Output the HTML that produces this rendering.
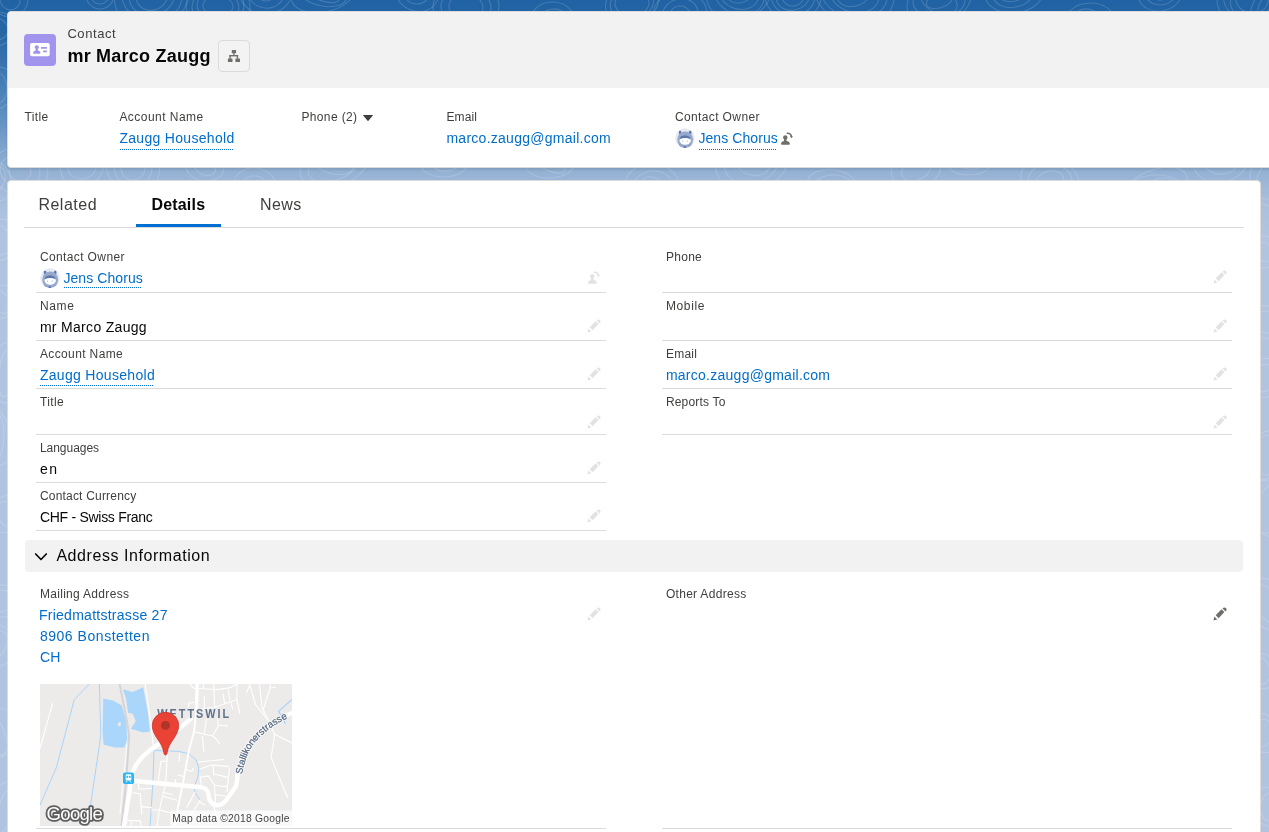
<!DOCTYPE html>
<html><head><meta charset="utf-8">
<style>
*{box-sizing:border-box;margin:0;padding:0}
html,body{width:1269px;height:832px;overflow:hidden}
body{font-family:"Liberation Sans",sans-serif;background:#b0c4df;position:relative;color:#080707}
.bg{position:absolute;left:0;top:0;width:1269px;height:832px;background:linear-gradient(to bottom,#2062a3 0px,#2666a6 30px,#3772af 60px,#5086bb 100px,#6c98c6 130px,#8aabd0 160px,#9fb8d8 185px,#acc1dd 210px,#b0c4df 235px,#b0c4df 832px);clip-path:circle(9999px)}
.t{position:absolute;white-space:nowrap;line-height:1}
.hdr{position:absolute;left:7px;top:11px;width:1280px;height:157px;background:#fff;border:1px solid #dddbda;border-radius:4px;box-shadow:0 2px 2px rgba(0,0,0,.1);overflow:hidden}
.hdr .top{position:absolute;left:0;top:0;width:100%;height:76px;background:#f3f2f2}
.card{position:absolute;left:7px;top:180px;width:1254px;height:700px;background:#fff;border:1px solid #dddbda;border-radius:4px 4px 0 0}
.hl{position:absolute;height:1px;background:#dddbda}
.dot{position:absolute;height:1px;background-image:linear-gradient(to right,#006dcc 50%,rgba(0,109,204,0) 50%);background-size:2px 1px}
.abs{position:absolute}
</style></head><body>
<div class="bg"></div>
<svg class="abs" style="left:0;top:0" width="1269" height="832" viewBox="0 0 1269 832" fill="none" stroke="#fff" stroke-opacity=".16" stroke-width="1.100"><ellipse cx="10" cy="-1" rx="10" ry="11" transform="rotate(-20 10 -1)"/><ellipse cx="10" cy="-1" rx="18" ry="18" transform="rotate(4 10 -1)"/><ellipse cx="100" cy="-5" rx="9" ry="9" transform="rotate(-4 100 -5)"/><ellipse cx="100" cy="-5" rx="14" ry="14" transform="rotate(16 100 -5)"/><ellipse cx="152" cy="-4" rx="16" ry="14" transform="rotate(-23 152 -4)"/><ellipse cx="152" cy="-4" rx="23" ry="19" transform="rotate(-14 152 -4)"/><ellipse cx="152" cy="-4" rx="30" ry="25" transform="rotate(3 152 -4)"/><ellipse cx="152" cy="-4" rx="38" ry="31" transform="rotate(-18 152 -4)"/><ellipse cx="218" cy="6" rx="15" ry="10" transform="rotate(4 218 6)"/><ellipse cx="218" cy="6" rx="21" ry="15" transform="rotate(7 218 6)"/><ellipse cx="218" cy="6" rx="26" ry="20" transform="rotate(-6 218 6)"/><ellipse cx="218" cy="6" rx="32" ry="24" transform="rotate(2 218 6)"/><ellipse cx="266" cy="-10" rx="10" ry="11" transform="rotate(-2 266 -10)"/><ellipse cx="266" cy="-10" rx="19" ry="18" transform="rotate(21 266 -10)"/><ellipse cx="266" cy="-10" rx="27" ry="24" transform="rotate(-7 266 -10)"/><ellipse cx="323" cy="-6" rx="17" ry="7" transform="rotate(19 323 -6)"/><ellipse cx="323" cy="-6" rx="24" ry="12" transform="rotate(11 323 -6)"/><ellipse cx="323" cy="-6" rx="32" ry="18" transform="rotate(-11 323 -6)"/><ellipse cx="417" cy="-8" rx="13" ry="12" transform="rotate(-4 417 -8)"/><ellipse cx="417" cy="-8" rx="22" ry="19" transform="rotate(23 417 -8)"/><ellipse cx="466" cy="7" rx="17" ry="13" transform="rotate(5 466 7)"/><ellipse cx="466" cy="7" rx="25" ry="19" transform="rotate(4 466 7)"/><ellipse cx="466" cy="7" rx="33" ry="25" transform="rotate(-2 466 7)"/><ellipse cx="553" cy="20" rx="14" ry="11" transform="rotate(-10 553 20)"/><ellipse cx="553" cy="20" rx="22" ry="18" transform="rotate(4 553 20)"/><ellipse cx="632" cy="3" rx="17" ry="13" transform="rotate(-2 632 3)"/><ellipse cx="632" cy="3" rx="22" ry="17" transform="rotate(-17 632 3)"/><ellipse cx="632" cy="3" rx="27" ry="21" transform="rotate(-19 632 3)"/><ellipse cx="680" cy="14" rx="10" ry="8" transform="rotate(-0 680 14)"/><ellipse cx="680" cy="14" rx="18" ry="15" transform="rotate(-17 680 14)"/><ellipse cx="680" cy="14" rx="27" ry="22" transform="rotate(-5 680 14)"/><ellipse cx="739" cy="-7" rx="13" ry="10" transform="rotate(-7 739 -7)"/><ellipse cx="739" cy="-7" rx="20" ry="16" transform="rotate(19 739 -7)"/><ellipse cx="739" cy="-7" rx="26" ry="21" transform="rotate(23 739 -7)"/><ellipse cx="739" cy="-7" rx="33" ry="26" transform="rotate(-17 739 -7)"/><ellipse cx="793" cy="-4" rx="11" ry="10" transform="rotate(-11 793 -4)"/><ellipse cx="793" cy="-4" rx="17" ry="14" transform="rotate(-18 793 -4)"/><ellipse cx="793" cy="-4" rx="22" ry="19" transform="rotate(2 793 -4)"/><ellipse cx="793" cy="-4" rx="28" ry="24" transform="rotate(5 793 -4)"/><ellipse cx="854" cy="-8" rx="18" ry="14" transform="rotate(-22 854 -8)"/><ellipse cx="854" cy="-8" rx="26" ry="20" transform="rotate(20 854 -8)"/><ellipse cx="854" cy="-8" rx="34" ry="26" transform="rotate(14 854 -8)"/><ellipse cx="854" cy="-8" rx="41" ry="32" transform="rotate(19 854 -8)"/><ellipse cx="939" cy="1" rx="13" ry="7" transform="rotate(-15 939 1)"/><ellipse cx="939" cy="1" rx="19" ry="12" transform="rotate(24 939 1)"/><ellipse cx="939" cy="1" rx="26" ry="17" transform="rotate(-3 939 1)"/><ellipse cx="939" cy="1" rx="33" ry="23" transform="rotate(-20 939 1)"/><ellipse cx="1014" cy="-9" rx="15" ry="10" transform="rotate(-21 1014 -9)"/><ellipse cx="1014" cy="-9" rx="22" ry="16" transform="rotate(-15 1014 -9)"/><ellipse cx="1014" cy="-9" rx="30" ry="22" transform="rotate(-6 1014 -9)"/><ellipse cx="1090" cy="20" rx="15" ry="10" transform="rotate(25 1090 20)"/><ellipse cx="1090" cy="20" rx="24" ry="17" transform="rotate(-2 1090 20)"/><ellipse cx="1160" cy="-9" rx="9" ry="9" transform="rotate(10 1160 -9)"/><ellipse cx="1160" cy="-9" rx="16" ry="14" transform="rotate(1 1160 -9)"/><ellipse cx="1160" cy="-9" rx="23" ry="20" transform="rotate(-15 1160 -9)"/><ellipse cx="1252" cy="0" rx="16" ry="13" transform="rotate(7 1252 0)"/><ellipse cx="1252" cy="0" rx="22" ry="18" transform="rotate(-20 1252 0)"/><ellipse cx="1252" cy="0" rx="29" ry="23" transform="rotate(17 1252 0)"/><ellipse cx="1252" cy="0" rx="35" ry="28" transform="rotate(1 1252 0)"/><ellipse cx="20" cy="171" rx="11" ry="10" transform="rotate(6 20 171)"/><ellipse cx="20" cy="171" rx="20" ry="17" transform="rotate(14 20 171)"/><ellipse cx="20" cy="171" rx="28" ry="24" transform="rotate(13 20 171)"/><ellipse cx="82" cy="167" rx="14" ry="12" transform="rotate(-7 82 167)"/><ellipse cx="82" cy="167" rx="22" ry="19" transform="rotate(-24 82 167)"/><ellipse cx="133" cy="168" rx="12" ry="12" transform="rotate(22 133 168)"/><ellipse cx="133" cy="168" rx="19" ry="18" transform="rotate(24 133 168)"/><ellipse cx="133" cy="168" rx="27" ry="24" transform="rotate(23 133 168)"/><ellipse cx="205" cy="167" rx="11" ry="8" transform="rotate(24 205 167)"/><ellipse cx="205" cy="167" rx="19" ry="14" transform="rotate(6 205 167)"/><ellipse cx="255" cy="187" rx="13" ry="11" transform="rotate(14 255 187)"/><ellipse cx="255" cy="187" rx="22" ry="19" transform="rotate(13 255 187)"/><ellipse cx="334" cy="165" rx="19" ry="9" transform="rotate(12 334 165)"/><ellipse cx="334" cy="165" rx="27" ry="15" transform="rotate(-21 334 165)"/><ellipse cx="334" cy="165" rx="35" ry="21" transform="rotate(-17 334 165)"/><ellipse cx="444" cy="161" rx="16" ry="10" transform="rotate(5 444 161)"/><ellipse cx="444" cy="161" rx="25" ry="16" transform="rotate(-1 444 161)"/><ellipse cx="550" cy="165" rx="16" ry="6" transform="rotate(22 550 165)"/><ellipse cx="550" cy="165" rx="24" ry="13" transform="rotate(-3 550 165)"/><ellipse cx="652" cy="185" rx="11" ry="8" transform="rotate(13 652 185)"/><ellipse cx="652" cy="185" rx="19" ry="14" transform="rotate(-9 652 185)"/><ellipse cx="652" cy="185" rx="27" ry="21" transform="rotate(2 652 185)"/><ellipse cx="752" cy="162" rx="18" ry="13" transform="rotate(19 752 162)"/><ellipse cx="752" cy="162" rx="28" ry="21" transform="rotate(-18 752 162)"/><ellipse cx="752" cy="162" rx="37" ry="28" transform="rotate(-17 752 162)"/><ellipse cx="833" cy="186" rx="19" ry="11" transform="rotate(-1 833 186)"/><ellipse cx="833" cy="186" rx="26" ry="16" transform="rotate(11 833 186)"/><ellipse cx="916" cy="170" rx="15" ry="10" transform="rotate(-22 916 170)"/><ellipse cx="916" cy="170" rx="25" ry="18" transform="rotate(-15 916 170)"/><ellipse cx="969" cy="163" rx="14" ry="6" transform="rotate(6 969 163)"/><ellipse cx="969" cy="163" rx="22" ry="12" transform="rotate(0 969 163)"/><ellipse cx="1050" cy="181" rx="14" ry="10" transform="rotate(-13 1050 181)"/><ellipse cx="1050" cy="181" rx="22" ry="17" transform="rotate(1 1050 181)"/><ellipse cx="1050" cy="181" rx="30" ry="23" transform="rotate(19 1050 181)"/><ellipse cx="1155" cy="188" rx="20" ry="8" transform="rotate(-19 1155 188)"/><ellipse cx="1155" cy="188" rx="27" ry="13" transform="rotate(-3 1155 188)"/><ellipse cx="1155" cy="188" rx="34" ry="18" transform="rotate(-21 1155 188)"/><ellipse cx="1220" cy="162" rx="17" ry="12" transform="rotate(7 1220 162)"/><ellipse cx="1220" cy="162" rx="27" ry="20" transform="rotate(-7 1220 162)"/><ellipse cx="-4" cy="29" rx="12" ry="11" transform="rotate(19 -4 29)"/><ellipse cx="-4" cy="29" rx="19" ry="17" transform="rotate(-17 -4 29)"/><ellipse cx="1269" cy="22" rx="12" ry="25" transform="rotate(-5 1269 22)"/><ellipse cx="1269" cy="22" rx="19" ry="31" transform="rotate(-4 1269 22)"/><ellipse cx="-2" cy="88" rx="9" ry="15" transform="rotate(-2 -2 88)"/><ellipse cx="-2" cy="88" rx="16" ry="21" transform="rotate(10 -2 88)"/><ellipse cx="1266" cy="101" rx="8" ry="24" transform="rotate(-19 1266 101)"/><ellipse cx="1266" cy="101" rx="15" ry="30" transform="rotate(21 1266 101)"/><ellipse cx="-3" cy="181" rx="7" ry="14" transform="rotate(20 -3 181)"/><ellipse cx="-3" cy="181" rx="14" ry="20" transform="rotate(-16 -3 181)"/><ellipse cx="1270" cy="180" rx="13" ry="20" transform="rotate(22 1270 180)"/><ellipse cx="1270" cy="180" rx="20" ry="26" transform="rotate(-5 1270 180)"/><ellipse cx="0" cy="240" rx="10" ry="15" transform="rotate(-11 0 240)"/><ellipse cx="0" cy="240" rx="17" ry="21" transform="rotate(15 0 240)"/><ellipse cx="1264" cy="252" rx="8" ry="10" transform="rotate(-21 1264 252)"/><ellipse cx="1264" cy="252" rx="15" ry="16" transform="rotate(-12 1264 252)"/><ellipse cx="1" cy="302" rx="8" ry="12" transform="rotate(-24 1 302)"/><ellipse cx="1" cy="302" rx="15" ry="17" transform="rotate(25 1 302)"/><ellipse cx="1266" cy="322" rx="11" ry="11" transform="rotate(10 1266 322)"/><ellipse cx="1266" cy="322" rx="18" ry="16" transform="rotate(22 1266 322)"/><ellipse cx="6" cy="373" rx="7" ry="24" transform="rotate(6 6 373)"/><ellipse cx="6" cy="373" rx="14" ry="30" transform="rotate(2 6 373)"/><ellipse cx="1264" cy="378" rx="11" ry="14" transform="rotate(15 1264 378)"/><ellipse cx="1264" cy="378" rx="18" ry="20" transform="rotate(25 1264 378)"/><ellipse cx="-6" cy="436" rx="10" ry="25" transform="rotate(1 -6 436)"/><ellipse cx="-6" cy="436" rx="17" ry="30" transform="rotate(-13 -6 436)"/><ellipse cx="1266" cy="455" rx="11" ry="20" transform="rotate(2 1266 455)"/><ellipse cx="1266" cy="455" rx="18" ry="25" transform="rotate(19 1266 455)"/><ellipse cx="6" cy="514" rx="8" ry="13" transform="rotate(-15 6 514)"/><ellipse cx="6" cy="514" rx="15" ry="19" transform="rotate(19 6 514)"/><ellipse cx="1269" cy="509" rx="14" ry="25" transform="rotate(17 1269 509)"/><ellipse cx="1269" cy="509" rx="21" ry="30" transform="rotate(-24 1269 509)"/><ellipse cx="2" cy="601" rx="9" ry="11" transform="rotate(8 2 601)"/><ellipse cx="2" cy="601" rx="16" ry="16" transform="rotate(-6 2 601)"/><ellipse cx="1267" cy="604" rx="11" ry="20" transform="rotate(-23 1267 604)"/><ellipse cx="1267" cy="604" rx="18" ry="26" transform="rotate(-16 1267 604)"/><ellipse cx="-3" cy="645" rx="9" ry="15" transform="rotate(24 -3 645)"/><ellipse cx="-3" cy="645" rx="16" ry="21" transform="rotate(-9 -3 645)"/><ellipse cx="1262" cy="671" rx="8" ry="13" transform="rotate(-8 1262 671)"/><ellipse cx="1262" cy="671" rx="15" ry="18" transform="rotate(-21 1262 671)"/><ellipse cx="-3" cy="735" rx="8" ry="22" transform="rotate(-20 -3 735)"/><ellipse cx="-3" cy="735" rx="15" ry="27" transform="rotate(16 -3 735)"/><ellipse cx="1263" cy="733" rx="9" ry="14" transform="rotate(6 1263 733)"/><ellipse cx="1263" cy="733" rx="16" ry="20" transform="rotate(-21 1263 733)"/><ellipse cx="5" cy="811" rx="7" ry="23" transform="rotate(14 5 811)"/><ellipse cx="5" cy="811" rx="14" ry="29" transform="rotate(5 5 811)"/><ellipse cx="1270" cy="807" rx="10" ry="14" transform="rotate(6 1270 807)"/><ellipse cx="1270" cy="807" rx="17" ry="20" transform="rotate(-18 1270 807)"/></svg>
<div class="hdr"><div class="top"></div></div>
<div class="card"></div>
<!-- tab line -->
<div class="hl" style="left:24px;top:227px;width:1220px"></div>
<div class="abs" style="left:136px;top:224px;width:85px;height:3px;background:#0070d2"></div>
<!-- field lines left -->
<div class="hl" style="left:36px;top:292px;width:570px"></div>
<div class="hl" style="left:36px;top:340px;width:570px"></div>
<div class="hl" style="left:36px;top:388px;width:570px"></div>
<div class="hl" style="left:36px;top:434px;width:570px"></div>
<div class="hl" style="left:36px;top:482px;width:570px"></div>
<div class="hl" style="left:36px;top:530px;width:570px"></div>
<div class="hl" style="left:36px;top:828px;width:570px"></div>
<!-- field lines right -->
<div class="hl" style="left:662px;top:292px;width:570px"></div>
<div class="hl" style="left:662px;top:340px;width:570px"></div>
<div class="hl" style="left:662px;top:388px;width:570px"></div>
<div class="hl" style="left:662px;top:434px;width:570px"></div>
<div class="hl" style="left:662px;top:828px;width:570px"></div>
<!-- section header -->
<div class="abs" style="left:25px;top:540px;width:1218px;height:32px;background:#f3f2f2;border-radius:4px"></div>
<!-- svg defs -->
<svg width="0" height="0" style="position:absolute">
<defs>
<clipPath id="avc"><circle cx="10" cy="10" r="10"/></clipPath>
<g id="pencil"><path d="M0.500,13.400 L1.300,9.600 L4.300,12.600 Z"/><path d="M2.700,8.300 L8.500,2.300 L11.400,5.100 L5.600,11.200 Z"/><path d="M9.500,1.400 Q11.200,-0.200 12.900,1.100 Q14.400,2.700 12.500,4.400 Z"/></g>
<g id="owner"><ellipse cx="4.3" cy="5.6" rx="2.2" ry="2.4"/><path d="M3.2,7 L5.4,7 L5.6,9 Q8.6,9.6 8.8,11.2 L8.8,12.1 Q8.8,12.8 8,12.8 L0.9,12.8 Q0.1,12.8 0.1,12.1 L0.1,11.2 Q0.3,9.6 3,9 Z"/><path d="M6.3,1.2 Q9.6,1 10.5,4.2" fill="none" stroke="currentColor" stroke-width="1.5" stroke-linecap="round"/><path d="M8.9,4.1 L12,4.4 L10.5,6.2 Z"/></g>
<g id="astro" clip-path="url(#avc)"><circle cx="10" cy="10" r="10" fill="#e6eaf2"/><rect x="3.900" y="2.800" width="2.400" height="3.600" rx=".9" fill="#5d77a8"/><rect x="14" y="2.800" width="2.400" height="3.600" rx=".9" fill="#5d77a8"/><circle cx="10.200" cy="11.400" r="7.900" fill="#96a8cc"/><path d="M3.500,15 L4.500,20 L15.900,20 L16.900,15Z" fill="#96a8cc"/><ellipse cx="10.200" cy="12.600" rx="5.700" ry="4.200" fill="#fff"/><path d="M4.800,11.200 Q5.200,7.600 8.600,7.800 Q9,6.900 10.200,7.400 Q11.600,6.700 12.200,7.900 Q15.300,8.300 15.600,11.200 Q10.200,8.600 4.800,11.200Z" fill="#5d77a8"/><circle cx="7.600" cy="13.200" r=".6" fill="#a9b8d6"/><circle cx="12.300" cy="13.200" r=".6" fill="#a9b8d6"/><circle cx="9.800" cy="19.200" r="1.300" fill="#5d77a8"/></g>
</defs></svg>
<!-- contact icon -->
<div class="abs" style="left:24px;top:34px;width:32px;height:32px;background:#a094ed;border-radius:4px"></div>
<svg class="abs" style="left:24px;top:34px" width="32" height="32" viewBox="0 0 32 32"><rect x="6.1" y="9" width="19.6" height="13.3" rx="1.8" fill="#fff"/><circle cx="12.8" cy="13.2" r="2" fill="#a094ed"/><path d="M11.8,14.5h2l.2,2q2.4.4,2.4,2v.6q0,.7-.7.700h-5.800q-.7,0-.7-.7v-.6q0-1.600,2.400-2z" fill="#a094ed"/><rect x="17" y="13" width="5.900" height="1.800" rx=".3" fill="#a094ed"/><rect x="19.100" y="16.400" width="3.800" height="1.900" rx=".3" fill="#a094ed"/></svg>
<!-- hierarchy button -->
<div class="abs" style="left:218px;top:40px;width:32px;height:32px;border:1px solid #dddbda;border-radius:4px;background:#f4f3f3"></div>
<svg class="abs" style="left:226px;top:48px" width="16" height="16" viewBox="0 0 16 16" fill="#706e6b"><rect x="5.800" y="1.900" width="4.300" height="3.300" rx=".4"/><rect x="7.300" y="5" width="1.300" height="2.200"/><rect x="3.400" y="7" width="8.700" height="1.400"/><rect x="3.400" y="7" width="1.400" height="3.700"/><rect x="10.700" y="7" width="1.400" height="3.700"/><rect x="1.900" y="10.600" width="4.600" height="3.400" rx=".4"/><rect x="9.400" y="10.600" width="4.600" height="3.400" rx=".4"/></svg>
<!-- phone triangle -->
<svg class="abs" style="left:362px;top:114px" width="12" height="8" viewBox="0 0 12 8"><path d="M0.800,.9 L11.200,.9 L6,7.200 Z" fill="#3e3e3c"/></svg>
<!-- avatars -->
<svg class="abs" style="left:675px;top:128px" width="20" height="20" viewBox="0 0 20 20"><use href="#astro"/></svg>
<svg class="abs" style="left:40px;top:268px" width="20" height="20" viewBox="0 0 20 20"><use href="#astro"/></svg>
<!-- change owner icons -->
<svg class="abs" style="left:781px;top:131.500px;color:#706e6b" width="14" height="14" viewBox="0 0 14 14" fill="#706e6b"><use href="#owner"/></svg>
<svg class="abs" style="left:587.500px;top:270.700px;color:#e4e2e1" width="14" height="14" viewBox="0 0 14 14" fill="#e4e2e1"><use href="#owner"/></svg>
<!-- dotted underlines -->
<div class="dot" style="left:120px;top:149px;width:114px"></div>
<div class="dot" style="left:699px;top:149px;width:78px"></div>
<div class="dot" style="left:64px;top:287px;width:78px"></div>
<div class="dot" style="left:40px;top:385px;width:114px"></div>
<!-- pencils left -->
<svg class="abs" style="left:587px;top:319.200px" width="14" height="14" fill="#e4e2e1"><use href="#pencil"/></svg>
<svg class="abs" style="left:587px;top:367.200px" width="14" height="14" fill="#e4e2e1"><use href="#pencil"/></svg>
<svg class="abs" style="left:587px;top:415.200px" width="14" height="14" fill="#e4e2e1"><use href="#pencil"/></svg>
<svg class="abs" style="left:587px;top:461.200px" width="14" height="14" fill="#e4e2e1"><use href="#pencil"/></svg>
<svg class="abs" style="left:587px;top:509.200px" width="14" height="14" fill="#e4e2e1"><use href="#pencil"/></svg>
<svg class="abs" style="left:587px;top:607px" width="14" height="14" fill="#e4e2e1"><use href="#pencil"/></svg>
<!-- pencils right -->
<svg class="abs" style="left:1213px;top:270.200px" width="14" height="14" fill="#e4e2e1"><use href="#pencil"/></svg>
<svg class="abs" style="left:1213px;top:319.200px" width="14" height="14" fill="#e4e2e1"><use href="#pencil"/></svg>
<svg class="abs" style="left:1213px;top:367.200px" width="14" height="14" fill="#e4e2e1"><use href="#pencil"/></svg>
<svg class="abs" style="left:1213px;top:415.200px" width="14" height="14" fill="#e4e2e1"><use href="#pencil"/></svg>
<svg class="abs" style="left:1213px;top:607px" width="14" height="14" fill="#706e6b"><use href="#pencil"/></svg>
<!-- chevron -->
<svg class="abs" style="left:33px;top:550px" width="16" height="12" viewBox="0 0 16 12"><path d="M2.700,4 L8,9.500 L13.300,4" fill="none" stroke="#080707" stroke-width="1.700" stroke-linecap="round" stroke-linejoin="round"/></svg>

<div id="txt" style="position:absolute;left:0;top:0;width:1269px;height:832px;will-change:transform">
<div class="t" style="left:67.40px;top:27px;font-size:13px;font-weight:400;color:#3e3e3c;letter-spacing:0.57px">Contact</div>
<div class="t" style="left:67.40px;top:47px;font-size:18px;font-weight:700;color:#080707;letter-spacing:0.23px">mr Marco Zaugg</div>
<div class="t" style="left:24.40px;top:111px;font-size:12px;font-weight:400;color:#3e3e3c;letter-spacing:0.40px">Title</div>
<div class="t" style="left:119.40px;top:111px;font-size:12px;font-weight:400;color:#3e3e3c;letter-spacing:0.47px">Account Name</div>
<div class="t" style="left:119.40px;top:131px;font-size:14px;font-weight:400;color:#006dcc;letter-spacing:0.31px">Zaugg Household</div>
<div class="t" style="left:301.40px;top:111px;font-size:12px;font-weight:400;color:#3e3e3c;letter-spacing:0.37px">Phone (2)</div>
<div class="t" style="left:446.40px;top:111px;font-size:12px;font-weight:400;color:#3e3e3c;letter-spacing:0.15px">Email</div>
<div class="t" style="left:446.40px;top:131px;font-size:14px;font-weight:400;color:#006dcc;letter-spacing:0.27px">marco.zaugg@gmail.com</div>
<div class="t" style="left:674.90px;top:111px;font-size:12px;font-weight:400;color:#3e3e3c;letter-spacing:0.38px">Contact Owner</div>
<div class="t" style="left:698.40px;top:131px;font-size:14px;font-weight:400;color:#006dcc;letter-spacing:0.08px">Jens Chorus</div>
<div class="t" style="left:38.40px;top:197px;font-size:16px;font-weight:400;color:#3e3e3c;letter-spacing:0.50px">Related</div>
<div class="t" style="left:151.40px;top:197px;font-size:16px;font-weight:700;color:#080707;letter-spacing:0.20px">Details</div>
<div class="t" style="left:259.90px;top:197px;font-size:16px;font-weight:400;color:#3e3e3c;letter-spacing:0.47px">News</div>
<div class="t" style="left:39.90px;top:251px;font-size:12px;font-weight:400;color:#3e3e3c;letter-spacing:0.38px">Contact Owner</div>
<div class="t" style="left:63.40px;top:271px;font-size:14px;font-weight:400;color:#006dcc;letter-spacing:0.08px">Jens Chorus</div>
<div class="t" style="left:39.90px;top:300px;font-size:12px;font-weight:400;color:#3e3e3c;letter-spacing:0.67px">Name</div>
<div class="t" style="left:39.90px;top:320px;font-size:14px;font-weight:400;color:#080707;letter-spacing:0.31px">mr Marco Zaugg</div>
<div class="t" style="left:39.90px;top:348px;font-size:12px;font-weight:400;color:#3e3e3c;letter-spacing:0.38px">Account Name</div>
<div class="t" style="left:39.90px;top:368px;font-size:14px;font-weight:400;color:#006dcc;letter-spacing:0.31px">Zaugg Household</div>
<div class="t" style="left:39.90px;top:396px;font-size:12px;font-weight:400;color:#3e3e3c;letter-spacing:0.40px">Title</div>
<div class="t" style="left:39.90px;top:442px;font-size:12px;font-weight:400;color:#3e3e3c;letter-spacing:-0.02px">Languages</div>
<div class="t" style="left:39.90px;top:462px;font-size:14px;font-weight:400;color:#080707;letter-spacing:1.60px">en</div>
<div class="t" style="left:39.90px;top:490px;font-size:12px;font-weight:400;color:#3e3e3c;letter-spacing:0.20px">Contact Currency</div>
<div class="t" style="left:39.90px;top:510px;font-size:14px;font-weight:400;color:#080707;letter-spacing:-0.28px">CHF - Swiss Franc</div>
<div class="t" style="left:56.40px;top:548px;font-size:16px;font-weight:400;color:#080707;letter-spacing:0.56px">Address Information</div>
<div class="t" style="left:39.90px;top:588px;font-size:12px;font-weight:400;color:#3e3e3c;letter-spacing:0.31px">Mailing Address</div>
<div class="t" style="left:38.90px;top:608px;font-size:14px;font-weight:400;color:#006dcc;letter-spacing:0.27px">Friedmattstrasse 27</div>
<div class="t" style="left:39.90px;top:629px;font-size:14px;font-weight:400;color:#006dcc;letter-spacing:0.54px">8906 Bonstetten</div>
<div class="t" style="left:39.90px;top:650px;font-size:14px;font-weight:400;color:#006dcc;letter-spacing:0.20px">CH</div>
<div class="t" style="left:665.90px;top:251px;font-size:12px;font-weight:400;color:#3e3e3c;letter-spacing:0.30px">Phone</div>
<div class="t" style="left:665.90px;top:300px;font-size:12px;font-weight:400;color:#3e3e3c;letter-spacing:0.64px">Mobile</div>
<div class="t" style="left:665.90px;top:348px;font-size:12px;font-weight:400;color:#3e3e3c;letter-spacing:0.25px">Email</div>
<div class="t" style="left:665.90px;top:368px;font-size:14px;font-weight:400;color:#006dcc;letter-spacing:0.26px">marco.zaugg@gmail.com</div>
<div class="t" style="left:665.90px;top:396px;font-size:12px;font-weight:400;color:#3e3e3c;letter-spacing:0.18px">Reports To</div>
<div class="t" style="left:665.90px;top:588px;font-size:12px;font-weight:400;color:#3e3e3c;letter-spacing:0.30px">Other Address</div>
</div>
<svg class="abs" style="left:40px;top:684px;will-change:transform" width="252" height="142" viewBox="0 0 252 142">
<defs><clipPath id="mc"><rect width="252" height="142"/></clipPath>
<path id="stpath" d="M197.500,99 Q199.500,80 206,66 Q216,49 233.200,38.200 Q243,32 256,27.600"/></defs>
<g clip-path="url(#mc)">
<rect width="252" height="142" fill="#edebea"/>
<!-- water -->
<path d="M63.200,14.600 L73,16.500 L81.500,21.200 L86.200,36.300 L87.200,55.200 L84.300,63.600 L74.900,63.600 L63.600,60.800 L62.600,47.600 Z" fill="#aad6fb"/>
<path d="M77.500,40 l2.500,-2.500 l1.200,3.500 l-2.500,1.500z" fill="#edebea"/>
<path d="M83,5.200 L92.800,8 L103.200,3.300 L107.900,28.700 L109.800,47.600 L103.200,48.500 L90.900,44.800 L95.700,37.200 L92.800,29.700 L88.100,28.700 L86.200,15.500 Z" fill="#aad6fb"/>
<!-- streams -->
<g fill="none" stroke="#a8d4fa" stroke-width="1">
<path d="M49.400,-0.100 L34.300,15.500 L16.400,83.500 L0,121.200"/>
<path d="M59.400,0 L60.800,51.400 L47.500,142"/>
<path d="M114,66.400 L113,95.500 L111.500,120.100 L110,143"/>
<path d="M114,66.400 L139.100,67.400 L149,69.900 L155.900,75.800 L158.800,83.700 L157.800,93.500 L154.400,102.400 L154.900,108.300 L160,116.200"/>
<path d="M252,15.400 L238.600,27.300 L239.900,29.400 L244.100,36.700 L245.400,40.100" stroke-width="1.300"/>
</g>
<!-- railway -->
<path d="M79.600,0 L87.200,38.300 L89.100,51.400 L86.200,96.700 L81.500,142" fill="none" stroke="#d4d4d8" stroke-width="2"/>
<!-- thin streets -->
<g fill="none" stroke="#fff" stroke-width="1.100" stroke-linecap="round" stroke-linejoin="round">
<path d="M12.600,19.300 L0,64.600"/>
<path d="M105.100,0 L110.800,38.300 L113.600,66.600"/>
<path d="M86.900,61 L80,130" stroke-width=".9"/>
<path d="M163.500,0 L163.500,4.300 M173.700,0 L174.600,23"/>
<path d="M150.300,0 Q151,3.500 154.500,4.300 L175.900,5.500 Q185,5 190.400,3.400 L197.200,0"/>
<path d="M197.200,0 L196.800,15.400 L199.800,29.400"/>
<path d="M196.800,15.400 L174.200,23.500 L157,25.600"/>
<path d="M188.200,6 L189.900,15.400 M183.100,10.200 L184.800,19.600 M191.200,19.200 L192.500,24.700 M164.300,12.800 L164.300,24.700"/>
<path d="M148.600,23 L148.600,19.200 L153.700,18.300"/>
<path d="M154.100,47.800 L172.500,52 Q177,54.500 179.300,59.700"/>
<path d="M172.500,52 L178.400,41.800 L177.600,35 M178.400,41.800 Q184,40.500 187.800,42.200"/>
<path d="M166.500,35 L164.300,48.600 M162.200,52 L163.900,67.400"/>
<path d="M209.600,0 L215.500,20.500 L227.900,35.800 L234.700,50.300 L252,58.900"/>
<path d="M209.600,1.700 L206.600,8.500 M219.400,0 L221.900,23 L227.900,35.800"/>
<path d="M230.500,0 L230,4.300 L223.600,24.700 M230,4.300 L235.600,3"/>
<path d="M234.700,50.300 L231.100,73.600 L247.500,113.300"/>
<path d="M127.300,70.400 L125.800,97.500"/>
<path d="M120.900,77.300 L126.300,77.300 M120.900,77.300 L118.400,96.500"/>
<path d="M139.600,69.900 L139.100,77.300"/>
<path d="M145.500,85.600 L151.900,87.600 L153.400,84.600 M138.100,91 L143.100,92.500 M135.200,95.500 L135.700,98.400"/>
<path d="M98.700,99.900 L98.700,105.300 L111.500,104.300"/>
<path d="M92.800,108.800 L100.200,109.800 L101.700,130 M101.700,122.600 L111.500,123.600"/>
<path d="M124.800,102.400 L119.400,126 L116.900,143"/>
<path d="M123.800,108.300 L132.200,110.700 M122.900,112.200 L137.100,116.200"/>
<path d="M111.500,126 L119.400,126 L131.200,129"/>
<path d="M85.900,136.400 L100.700,136.900 L100.700,143 M91.300,136.900 L91.300,143"/>
<path d="M154.900,108.300 L147,123.100 M160,116.200 L151.900,130 L148.500,142"/>
<path d="M158,78 L183.900,75.500"/>
<path d="M159.900,84.900 L171.900,81.100 L188.300,82.400 M173.100,81.100 L173.800,91.200"/>
<path d="M160.500,93.100 L168.700,91.900 L174.400,101.300 L187,102.600"/>
<path d="M173.800,90 L187,93.100 M189.500,83.700 L187,107.600"/>
<path d="M174.400,101.300 L175.700,119 M175.700,110.800 L185.700,112 M159.900,93.100 L161.800,102.600"/>
<path d="M159.300,117.700 L164.900,120.900 M173.100,121.500 L180.700,141.700"/>
</g>
<!-- mid roads -->
<g fill="none" stroke="#fff" stroke-linecap="round" stroke-linejoin="round">
<path d="M157.100,0 L156.700,21.300 L154.100,47.800 L149,66 L143.100,98.400 L137.100,128 L135.200,143" stroke-width="1.900"/>
<path d="M157.100,0 L156.700,24" stroke-width="3.400"/>
<!-- main roads -->
<path d="M151,34.800 L130,52 L109.600,66.400 Q97.700,75.700 92.500,88 Q90.500,95 89.900,105.300 L85.900,130 L83.900,143" stroke-width="4.400"/>
<path d="M93.800,97 L161.800,103.300 Q168.100,104.500 168.500,111 Q169,119 175.700,121.200 Q181,122 186,116.500 L195.800,102.600 Q197.700,96 197.700,90" stroke-width="4.400"/>
<path d="M197.500,92 Q200,78 206,66 Q216,49 233.200,38.200 Q243,32 252,29" stroke-width="4.200"/>
</g>
<!-- street label -->
<text font-family="Liberation Sans, sans-serif" font-size="9.800" fill="#64768e" stroke="#f6f5f4" stroke-width="2" paint-order="stroke" letter-spacing=".1" dy="3.300"><textPath href="#stpath" startOffset="9">Stallikonerstrasse</textPath></text>
<text font-family="Liberation Sans, sans-serif" font-size="9.800" fill="#64768e" letter-spacing=".1" dy="3.300"><textPath href="#stpath" startOffset="9">Stallikonerstrasse</textPath></text>
<!-- city label -->
<text transform="translate(117.300,34.400) scale(.86,1)" font-family="Liberation Sans, sans-serif" font-size="12.600" font-weight="700" fill="#5f718b" stroke="#edebea" stroke-width="1.200" paint-order="stroke" letter-spacing="2.350">WETTSWIL</text>
<!-- station -->
<rect x="83" y="88.600" width="11" height="11.400" rx="1.800" fill="#29b6f6"/>
<path d="M85.700,91.200 q0,-1 1,-1 h3.600 q1,0 1,1 v4.600 q0,.8 -.8,.8 h-4 q-.8,0 -.8,-.8z" fill="#fff"/>
<rect x="86.400" y="91.800" width="1.700" height="2" fill="#29b6f6"/><rect x="88.900" y="91.800" width="1.700" height="2" fill="#29b6f6"/>
<path d="M86.200,98.400 l.9,-1.600 M90.800,98.400 l-.9,-1.600" stroke="#fff" stroke-width=".8"/>
<!-- pin -->
<path d="M125.500,71 C124.500,71 124,70 123.800,68.500 C122.500,58 112.300,52 112.300,41.500 A13.200,13.200 0 0 1 138.700,41.500 C138.700,52 128.500,58 127.200,68.500 C127,70 126.500,71 125.500,71 Z" fill="#ea4335" stroke="#c5352b" stroke-width=".8"/>
<circle cx="125.500" cy="41.400" r="4.500" fill="#b1342b"/>
<!-- google logo -->
<text x="6.600" y="135.800" font-family="Liberation Sans, sans-serif" font-size="18.600" font-weight="400" fill="#5e5e5e" stroke="#5e5e5e" stroke-width="3.700" stroke-linejoin="round" letter-spacing="-.75">Google</text>
<text x="6.600" y="135.800" font-family="Liberation Sans, sans-serif" font-size="18.600" font-weight="400" fill="#fff" letter-spacing="-.75">Google</text>
<!-- copyright -->
<rect x="130.300" y="126.500" width="121.700" height="15.500" fill="#fff" fill-opacity=".7"/>
<text x="132.200" y="137.600" font-family="Liberation Sans, sans-serif" font-size="10.300" fill="#444" letter-spacing=".25">Map data ©2018 Google</text>
</g>
</svg>

</body></html>
